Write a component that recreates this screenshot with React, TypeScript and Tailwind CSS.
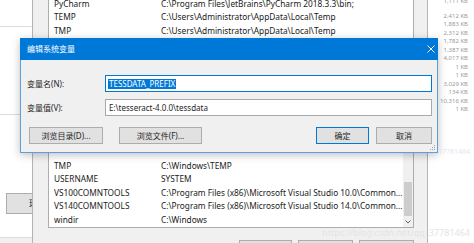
const topRows = [
  { name: "PyCharm", value: "C:\\Program Files\\JetBrains\\PyCharm 2018.3.3\\bin;" },
  { name: "TEMP", value: "C:\\Users\\Administrator\\AppData\\Local\\Temp" },
  { name: "TMP", value: "C:\\Users\\Administrator\\AppData\\Local\\Temp" },
]

const sysRows = [
  { name: "TMP", value: "C:\\Windows\\TEMP" },
  { name: "USERNAME", value: "SYSTEM" },
  { name: "VS100COMNTOOLS", value: "C:\\Program Files (x86)\\Microsoft Visual Studio 10.0\\Common..." },
  { name: "VS140COMNTOOLS", value: "C:\\Program Files (x86)\\Microsoft Visual Studio 14.0\\Common..." },
  { name: "windir", value: "C:\\Windows" },
]

const sizes = ["2,412 KB", "1,883 KB", "2,312 KB", "1,782 KB", "1,387 KB", "4,017 KB", "1 KB", "1 KB", "3,029 KB", "134 KB", "10,316 KB", "1 KB"]

function VarRow({ name, value }: { name: string; value: string }) {
  return (
    <div className="h-[13.5px] shrink-0 flex items-center pl-[5px] text-[8.3px] text-[#1a1a1a] whitespace-nowrap">
      <span className="w-[107px] shrink-0">{name}</span>
      <span>{value}</span>
    </div>
  )
}

function WinButton({ label, className }: { label: string; className: string }) {
  return (
    <div className={"h-[17px] shrink-0 flex items-center justify-center bg-[#e1e1e1] border text-[8px] text-[#1e1e1e] " + className}>
      {label}
    </div>
  )
}

export default function App() {
  return (
    <div className="relative w-[474px] h-[243px] overflow-hidden bg-white flex font-['Noto_Sans','Noto_Sans_CJK_SC',sans-serif]">
      {/* system properties, behind */}
      <div className="w-[32px] shrink-0 flex flex-col overflow-hidden bg-white">
        <div className="h-[27px] shrink-0 border-b border-[#dcdcdc]" />
        <div className="h-[88px] shrink-0 border-b border-[#dcdcdc]" />
        <div className="h-[78px] shrink-0" />
        <div className="h-[21px] shrink-0 pl-[6px]">
          <div className="w-[26px] h-full overflow-hidden bg-[#e1e1e1] border border-r-0 border-[#adadad]">
            <div className="h-full flex items-center pl-[22px] text-[9px] text-[#1e1e1e] whitespace-nowrap">环</div>
          </div>
        </div>
        <div className="flex-1" />
        <div className="h-[6px] shrink-0 bg-[#f0f0f0] border-t border-[#dcdcdc]" />
      </div>

      {/* environment variables dialog */}
      <div className="w-[396px] shrink-0 flex flex-col pl-[15px] bg-[#f0f0f0] border-x border-[#b4b4b4]">
        <div className="w-[366px] h-[48px] shrink-0 flex flex-col overflow-hidden bg-white border border-t-0 border-[#adadad]">
          <div className="-mt-[2.75px] flex flex-col">
            {topRows.map((r) => (
              <VarRow key={r.name} {...r} />
            ))}
          </div>
        </div>
        <div className="h-[56px] shrink-0 flex justify-end gap-[6px] pt-[6px] w-[366px]">
          <div className="w-[53px] h-[17px] bg-[#e1e1e1] border border-[#adadad]" />
          <div className="w-[55px] h-[17px] bg-[#e1e1e1] border border-[#adadad]" />
          <div className="w-[55px] h-[17px] bg-[#e1e1e1] border border-[#adadad]" />
        </div>
        <div className="w-[366px] h-[124px] shrink-0 flex bg-white border border-[#adadad]">
          <div className="flex-1 flex flex-col overflow-hidden">
            <div className="h-[54px] shrink-0" />
            {sysRows.map((r) => (
              <VarRow key={r.name} {...r} />
            ))}
          </div>
          <div className="w-[10px] shrink-0 flex flex-col bg-[#f0f0f0]">
            <div className="h-[77px] shrink-0" />
            <div className="h-[34px] shrink-0 mx-[1px] bg-[#cdcdcd]" />
            <div className="flex-1 flex items-center justify-center">
              <svg width="6" height="4" viewBox="0 0 6 4">
                <path d="M0.5 0.5 L3 3 L5.5 0.5" fill="none" stroke="#606060" strokeWidth="1" />
              </svg>
            </div>
          </div>
        </div>
        <div className="flex justify-end gap-[6px] pt-[12px] w-[366px]">
          <div className="w-[53px] h-[20px] bg-[#e1e1e1] border border-[#adadad]" />
          <div className="w-[55px] h-[20px] bg-[#e1e1e1] border border-[#adadad]" />
          <div className="w-[55px] h-[20px] bg-[#e1e1e1] border border-[#adadad]" />
        </div>
      </div>

      {/* explorer size column, behind */}
      <div className="flex-1 flex flex-col items-end pr-[6px] bg-white text-[6px] text-[#9a9a9a] leading-none">
        <div className="-mt-[3.25px] h-[8.5px] shrink-0 flex items-center">1,111 KB</div>
        <div className="h-[6.25px] shrink-0" />
        {sizes.map((s, i) => (
          <div key={i} className="h-[8.5px] shrink-0 flex items-center">
            {s}
          </div>
        ))}
      </div>

      {/* edit system variable dialog */}
      <div className="absolute left-[20px] top-[38px] w-[418px] flex flex-col shadow-[0_2px_8px_rgba(0,0,0,0.25)]">
        <div className="h-[22px] flex items-center justify-between pl-[7px] pr-[3px] bg-[#0078d7] text-white text-[8px]">
          <span>编辑系统变量</span>
          <svg width="8" height="8" viewBox="0 0 8 8">
            <path d="M0.5 0.5 L7.5 7.5 M7.5 0.5 L0.5 7.5" stroke="#fff" strokeWidth="1" />
          </svg>
        </div>
        <div className="relative h-[93px] flex flex-col pt-[15px] bg-[#f0f0f0] border border-t-0 border-[#5b9fe0] text-[8px] text-[#1e1e1e]">
          <div className="flex items-center pl-[6px] pr-[5px]">
            <span className="w-[78px] shrink-0">变量名(N):</span>
            <div className="flex-1 h-[17px] flex items-center pl-[2px] bg-white border border-[#0078d7]">
              <span className="bg-[#0078d7] text-white leading-[10px] px-[1px]">TESSDATA_PREFIX</span>
            </div>
          </div>
          <div className="flex items-center pl-[6px] pr-[5px] pt-[7px]">
            <span className="w-[78px] shrink-0">变量值(V):</span>
            <div className="flex-1 h-[17px] flex items-center pl-[3px] bg-white border border-[#a9a9a9]">
              E:\tesseract-4.0.0\tessdata
            </div>
          </div>
          <div className="flex items-center pl-[8px] pr-[5px] pt-[11px]">
            <WinButton label="浏览目录(D)..." className="w-[74px] border-[#adadad]" />
            <WinButton label="浏览文件(F)..." className="w-[83px] ml-[16px] border-[#adadad]" />
            <div className="flex-1" />
            <WinButton label="确定" className="w-[53px] border-[#0078d7]" />
            <WinButton label="取消" className="w-[56px] ml-[7px] border-[#adadad]" />
          </div>
          <svg className="absolute right-[1px] bottom-[1px]" width="6" height="6" viewBox="0 0 6 6">
            <rect x="4" y="0" width="1" height="1" fill="#a0a0a0" />
            <rect x="2" y="2" width="1" height="1" fill="#a0a0a0" />
            <rect x="4" y="2" width="1" height="1" fill="#a0a0a0" />
            <rect x="0" y="4" width="1" height="1" fill="#a0a0a0" />
            <rect x="2" y="4" width="1" height="1" fill="#a0a0a0" />
            <rect x="4" y="4" width="1" height="1" fill="#a0a0a0" />
          </svg>
        </div>
      </div>

      {/* watermarks */}
      <div className="absolute right-[4px] top-[147px] text-[7px] text-[#dfe6ee]">37781464</div>
      <div className="absolute right-[4px] top-[226px] text-[9px] text-[#e4e4e4]">https://blog.csdn.net/qq_37781464</div>
    </div>
  )
}
